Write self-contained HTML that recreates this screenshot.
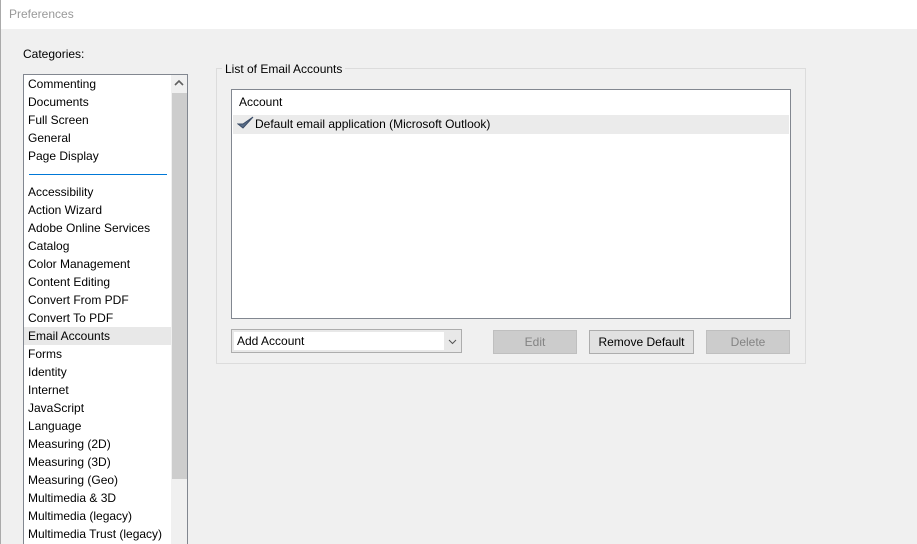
<!DOCTYPE html>
<html><head><style>
*{margin:0;padding:0;box-sizing:border-box}
html,body{width:917px;height:544px;overflow:hidden}
body{background:#f0f0f0;font-family:"Liberation Sans",sans-serif;font-size:12px;color:#000;position:relative}
.a{position:absolute}
.title{left:0;top:0;width:917px;height:29px;background:#fff}
.it{position:absolute;left:4px;height:18px;line-height:18px;white-space:nowrap}
.btn{position:absolute;top:330px;height:24px;line-height:22px;text-align:center;border:1px solid #adadad;background:#e1e1e1}
.dis{background:#cccccc;border-color:#bfbfbf;color:#838383}
</style></head><body>
<div class="a title"></div>
<div class="a" style="left:0;top:0;width:1px;height:544px;background:#aaa"></div>
<div class="a" style="left:9px;top:7px;color:#999;font-size:12px">Preferences</div>
<div class="a" style="left:23px;top:47px">Categories:</div>
<div class="a" style="left:23px;top:74px;width:165px;height:480px;background:#fff;border:1px solid #828790">
<div class="it" style="top:0px">Commenting</div>
<div class="it" style="top:18px">Documents</div>
<div class="it" style="top:36px">Full Screen</div>
<div class="it" style="top:54px">General</div>
<div class="it" style="top:72px">Page Display</div>
<div class="a" style="left:5px;top:99px;width:138px;height:1px;background:#0078d7"></div>
<div class="it" style="top:108px">Accessibility</div>
<div class="it" style="top:126px">Action Wizard</div>
<div class="it" style="top:144px">Adobe Online Services</div>
<div class="it" style="top:162px">Catalog</div>
<div class="it" style="top:180px">Color Management</div>
<div class="it" style="top:198px">Content Editing</div>
<div class="it" style="top:216px">Convert From PDF</div>
<div class="it" style="top:234px">Convert To PDF</div>
<div class="a" style="left:0;top:252px;width:147px;height:18px;background:#e8e8e8"></div>
<div class="it" style="top:252px">Email Accounts</div>
<div class="it" style="top:270px">Forms</div>
<div class="it" style="top:288px">Identity</div>
<div class="it" style="top:306px">Internet</div>
<div class="it" style="top:324px">JavaScript</div>
<div class="it" style="top:342px">Language</div>
<div class="it" style="top:360px">Measuring (2D)</div>
<div class="it" style="top:378px">Measuring (3D)</div>
<div class="it" style="top:396px">Measuring (Geo)</div>
<div class="it" style="top:414px">Multimedia &amp; 3D</div>
<div class="it" style="top:432px">Multimedia (legacy)</div>
<div class="it" style="top:450px">Multimedia Trust (legacy)</div>
<div class="a" style="left:147px;top:0;width:16px;height:478px;background:#f0f0f0"></div>
<div class="a" style="left:148px;top:18px;width:15px;height:386px;background:#cdcdcd"></div>
<svg class="a" style="left:150px;top:4px" width="10" height="8"><path d="M1 6 L5 2 L9 6" stroke="#606060" stroke-width="1.6" fill="none"/></svg>
</div>
<div class="a" style="left:216px;top:68px;width:590px;height:296px;border:1px solid #dcdcdc"></div>
<div class="a" style="left:222px;top:62px;background:#f0f0f0;padding:0 3px">List of Email Accounts</div>
<div class="a" style="left:231px;top:89px;width:560px;height:230px;background:#fff;border:1px solid #828790">
<div class="a" style="left:7px;top:5px">Account</div>
<div class="a" style="left:1px;top:25px;width:556px;height:19px;background:#ebebeb"></div>
<svg class="a" style="left:5px;top:26px" width="17" height="14"><path d="M1 8 L6 12 L16 1 L6 8 Z" fill="#5a6f8a" stroke="#3b4c66" stroke-width="1"/></svg>
<div class="a" style="left:23px;top:27px">Default email application (Microsoft Outlook)</div>
</div>
<div class="a" style="left:231px;top:329px;width:231px;height:24px;border:1px solid #adadad;background:#e8e8e8">
<div class="a" style="left:2px;top:2px;width:210px;height:18px;background:#fff;line-height:18px;padding-left:3px">Add Account</div>
<svg class="a" style="left:216px;top:9px" width="9" height="6"><path d="M1 1 L4.5 4.5 L8 1" stroke="#555" fill="none"/></svg>
</div>
<div class="btn dis" style="left:493px;width:84px">Edit</div>
<div class="btn" style="left:589px;width:105px">Remove Default</div>
<div class="btn dis" style="left:706px;width:84px">Delete</div>
</body></html>
